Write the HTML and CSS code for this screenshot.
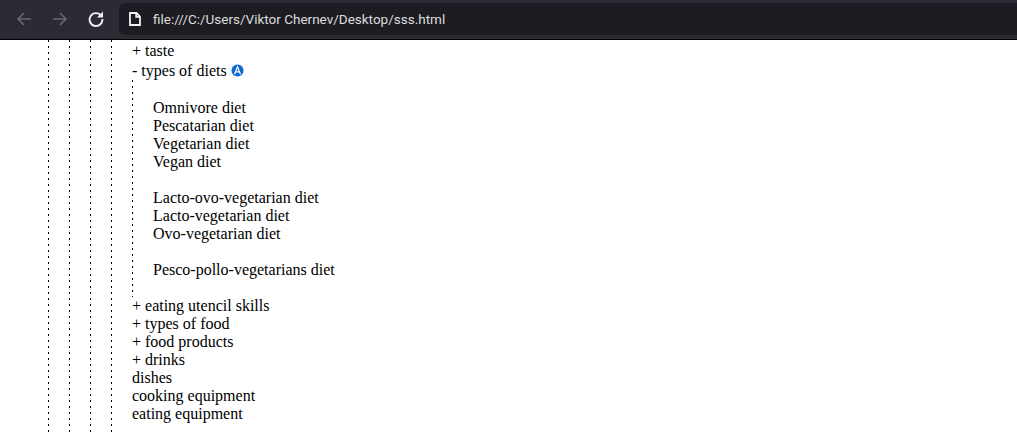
FILE: index.html
```html
<!DOCTYPE html>
<html lang="en">
<head>
<meta charset="utf-8">
<title>sss.html</title>
<link rel="stylesheet" href="styles.css">
</head>
<body>
<header class="toolbar">
  <svg class="nav-icon dim" viewBox="0 0 16 16"><path d="M15 8H2M8 2 2 8l6 6"/></svg>
  <svg class="nav-icon dim" viewBox="0 0 16 16"><path d="M1 8h13M8 2l6 6-6 6"/></svg>
  <svg class="nav-icon reload" viewBox="0 0 16 16"><path d="M13.2 4.8A6.4 6.4 0 1 0 14.4 8"/><path class="fill" d="M15 .6v6H9z"/></svg>
  <div class="omnibox">
    <svg class="page-icon" viewBox="0 0 12 14"><path d="M1 1h6.5L11 4.5V13H1z"/><path d="M7.2 1v3.8H11"/></svg>
    <span class="url">file:///C:/Users/Viktor Chernev/Desktop/sss.html</span>
  </div>
</header>
<main class="page">
  <div class="level"><div class="level"><div class="level"><div class="level leaf">
    <div class="row">+ taste</div>
    <div class="row row-icon">- types of diets <svg class="badge" viewBox="0 0 14 14"><circle cx="7" cy="7" r="6.5"/><path d="M3.8 11 7 3l3.2 8M5 8.4h4"/></svg></div>
    <div class="level branch">
      <div class="row">&nbsp;</div>
      <div class="row">Omnivore diet</div>
      <div class="row">Pescatarian diet</div>
      <div class="row">Vegetarian diet</div>
      <div class="row">Vegan diet</div>
      <div class="row">&nbsp;</div>
      <div class="row">Lacto-ovo-vegetarian diet</div>
      <div class="row">Lacto-vegetarian diet</div>
      <div class="row">Ovo-vegetarian diet</div>
      <div class="row">&nbsp;</div>
      <div class="row">Pesco-pollo-vegetarians diet</div>
      <div class="row">&nbsp;</div>
    </div>
    <div class="row">+ eating utencil skills</div>
    <div class="row">+ types of food</div>
    <div class="row">+ food products</div>
    <div class="row">+ drinks</div>
    <div class="row">dishes</div>
    <div class="row">cooking equipment</div>
    <div class="row">eating equipment</div>
    <div class="row">&nbsp;</div>
  </div></div></div></div>
</main>
</body>
</html>
```
FILE: styles.css
```css
html, body {
  margin: 0;
  height: 100%;
  overflow: hidden;
  background: #fff;
}
.toolbar {
  box-sizing: border-box;
  height: 40px;
  display: flex;
  align-items: center;
  background: #2b2b33;
  border-bottom: 1px solid #000;
  padding: 0 0 1px 16px;
}
.nav-icon {
  width: 16px;
  height: 16px;
  margin-right: 20px;
  fill: none;
  stroke: #f2f2f4;
  stroke-width: 1.5;
}
.nav-icon.dim {
  stroke: #69696f;
}
.nav-icon.reload {
  margin-right: 15px;
  stroke-width: 1.9;
}
.nav-icon .fill {
  fill: #f2f2f4;
  stroke: none;
}
.omnibox {
  flex: 1;
  height: 32px;
  display: flex;
  align-items: center;
  background: #1c1c22;
  border-radius: 6px 0 0 6px;
  padding-left: 10px;
}
.page-icon {
  width: 12px;
  height: 14px;
  margin-right: 12px;
  fill: none;
  stroke: #f2f2f4;
  stroke-width: 1.8;
}
.url {
  font: 13.5px/20px "Roboto", "Liberation Sans", sans-serif;
  color: #dcdcde;
}
.page {
  height: 395px;
  overflow: hidden;
  padding-left: 48px;
  color: #000;
  font: 16px/18px "Liberation Serif", serif;
}
.level {
  padding-left: 21px;
  background: linear-gradient(#000 2px, transparent 2px) left top / 1px 6px repeat-y;
}
.leaf {
  padding-top: 2px;
  min-height: 400px;
}
.branch {
  padding-top: 1px;
}
.row {
  height: 18px;
  white-space: pre-wrap;
}
.row-icon {
  height: 20px;
  padding-top: 2px;
  box-sizing: border-box;
}
.badge {
  width: 13px;
  height: 13px;
  vertical-align: -1px;
  fill: none;
  stroke: #fff;
  stroke-width: 1.3;
}
.badge circle {
  fill: #1069d2;
  stroke: none;
}
```
